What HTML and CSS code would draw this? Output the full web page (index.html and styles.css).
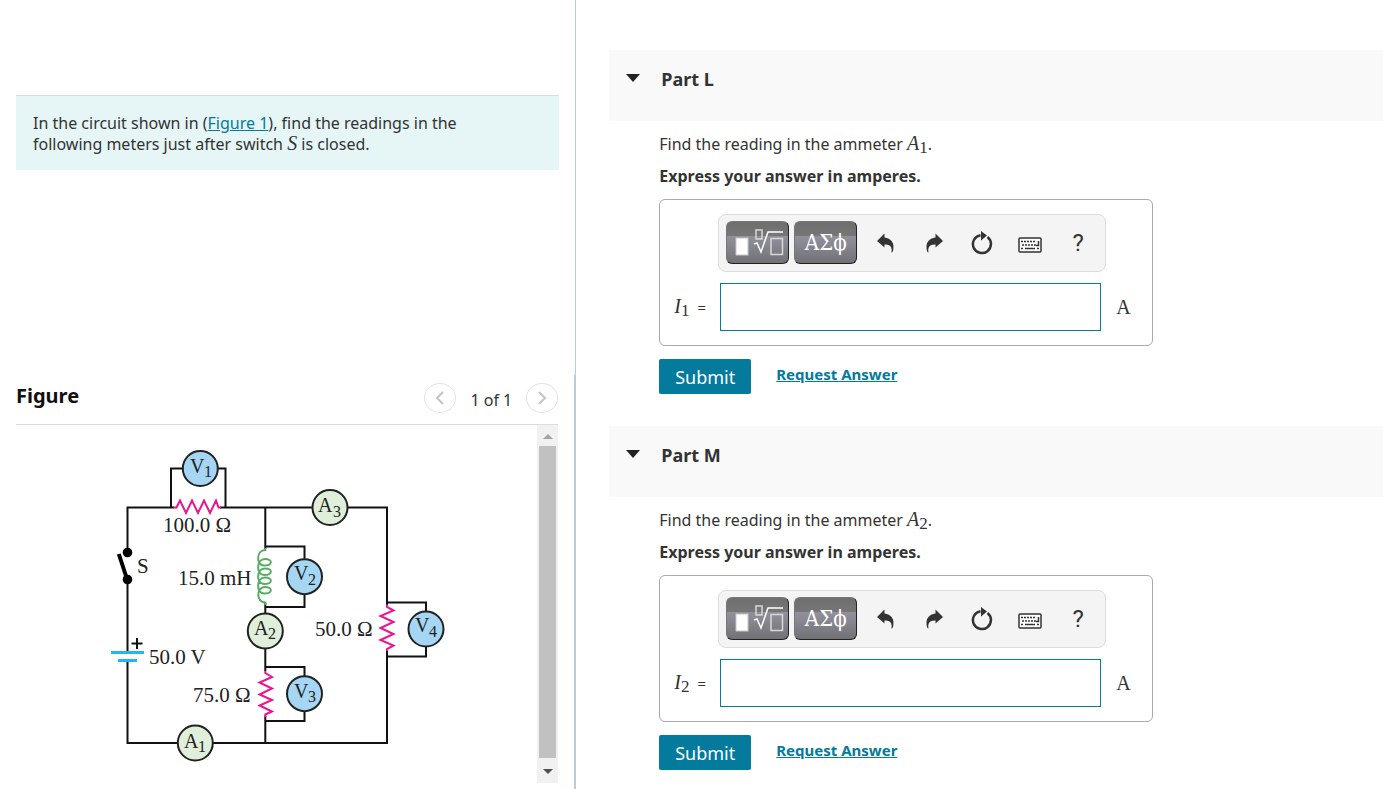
FILE: index.html
```html
<!DOCTYPE html>
<html lang="en">
<head>
  <meta charset="UTF-8">
  <title>Circuit with meters</title>
  <link rel="stylesheet" href="styles.css">
</head>
<body>
<svg class="sprite" aria-hidden="true">
  <symbol id="templates" viewBox="0 0 52 30">
    <rect x="4" y="10" width="12" height="17" fill="#fff" stroke="#c8c8c8"/>
    <rect x="24" y="2" width="6" height="9" fill="none" stroke="#d8d8d8" stroke-width="1.5"/>
    <path d="M22 16l3-1 4 9 7-20h15" fill="none" stroke="#fff" stroke-width="1.5"/>
    <rect x="39" y="10.5" width="11.500" height="16" fill="none" stroke="#d8d8d8" stroke-width="1.5"/>
  </symbol>
  <symbol id="undo" viewBox="0 0 20 20">
    <path d="M1 8L8.500 .500V4.500C15 5 19 10 17 18Q16 20 15.500 19.500C16.500 14 14 11 8.500 11.500V14.500Z"/>
  </symbol>
  <symbol id="redo" viewBox="0 0 20 20">
    <path d="M19 8L11.500 .500V4.500C5 5 1 10 3 18Q4 20 4.500 19.500C3.500 14 6 11 11.500 11.500V14.500Z"/>
  </symbol>
  <symbol id="reset" viewBox="0 0 24 24">
    <path d="M17.500 6A9 9 0 1 1 10.500 4.200" fill="none" stroke="currentColor" stroke-width="2.500"/>
    <path d="M11 0L17 4.500 11 9.500Z"/>
  </symbol>
  <symbol id="keyboard" viewBox="0 0 24 16">
    <rect x="1" y="1" width="22" height="14" rx="1" fill="#fff" stroke="currentColor" stroke-width="1.5"/>
    <path d="M3 4.500h15M4 8h14" fill="none" stroke="currentColor" stroke-width="1.500" stroke-dasharray="2 1"/>
    <path d="M20.500 4v4.500H18M3 11.500h2M7 11.500h10M19 11.500h2" fill="none" stroke="currentColor" stroke-width="1.500"/>
  </symbol>
</svg>

<div class="page">
  <div class="left">
    <div class="problem">
      <p class="intro">In the circuit shown in (<a href="#figure">Figure 1</a>), find the readings in the following meters just after switch <i class="math">S</i> is closed.</p>
    </div>
    <div class="figure" id="figure">
      <div class="figure-head">
        <h2>Figure</h2>
        <div class="pager">
          <button type="button" class="round" aria-label="Previous figure"><svg width="10" height="14" viewBox="0 0 10 14"><path d="M8 1L2 7l6 6"/></svg></button>
          <span>1 of 1</span>
          <button type="button" class="round" aria-label="Next figure"><svg width="10" height="14" viewBox="0 0 10 14"><path d="M2 1l6 6-6 6"/></svg></button>
        </div>
      </div>
      <div class="figure-body">
        <svg class="circuit" width="360" height="330" viewBox="100 440 360 330">
          <!-- wires -->
          <g class="wire">
            <path d="M174 507.500H127.500V552M127.500 580V652M127.500 661V743H387V650M387 606V507.500H220"/>
            <path d="M171 507.500V468.500H225.500V507.500"/>
            <path d="M265.300 507.500V549M265.300 546.500H304.500V607H265.300M265.300 603V671M265.300 667H304.500V721H265.300M265.300 716V743"/>
            <path d="M387 602.500H426V656.500H387"/>
          </g>
          <!-- resistors -->
          <g class="resistor">
            <path d="M173.500 507.500H176.500L180 500.500 186 513 192 500.500 198 513 204 500.500 210 513 216 500.500 218.500 507.500H221"/>
            <path d="M265.300 671V673L272 677 259.500 682.500 272 688.500 259.500 694.500 272 700 259.500 705.500 272 711.500 265.300 714.500V717"/>
            <path d="M387 604.500V607L393.500 610.500 380.500 616 393.500 622 380.500 628 393.500 634 380.500 640 393.500 645.500 387 649V651"/>
          </g>
          <!-- inductor -->
          <path class="coil" d="M265.300 548V550C256 550 256 565.500 264 565.500C273 565.500 273 559 265 559C256 559 256 575 264 575C273 575 273 568.500 265 568.500C256 568.500 256 584 264 584C273 584 273 577.500 265 577.500C256 577.500 256 593.500 264 593.500C273 593.500 273 587 265 587C256 587 256 602.500 265.300 602.500V605"/>
          <!-- switch -->
          <circle cx="127.500" cy="552.500" r="4.800"/>
          <circle cx="127.500" cy="579.500" r="4.800"/>
          <path class="lever" d="M118.800 554L127 579"/>
          <!-- battery -->
          <path class="plate" d="M111 652.500H144M118 660.500H137"/>
          <path class="wire" d="M131.500 643.500H142.500M137 638V649"/>
          <!-- meters -->
          <g class="volt">
            <circle cx="200.300" cy="468.500" r="17.500"/>
            <circle cx="304.500" cy="576.700" r="17.500"/>
            <circle cx="304.500" cy="693.700" r="17.500"/>
            <circle cx="426" cy="629" r="17.500"/>
          </g>
          <g class="amp">
            <circle cx="195.300" cy="743" r="17.500"/>
            <circle cx="265.300" cy="631" r="17.500"/>
            <circle cx="330" cy="507.500" r="17.500"/>
          </g>
          <g class="letter">
            <text x="190" y="473">V</text><text class="sub" x="204" y="477">1</text>
            <text x="294" y="580">V</text><text class="sub" x="308" y="585">2</text>
            <text x="294" y="698">V</text><text class="sub" x="308" y="702">3</text>
            <text x="415" y="632">V</text><text class="sub" x="429" y="637">4</text>
            <text x="184" y="748">A</text><text class="sub" x="198" y="752">1</text>
            <text x="254" y="635">A</text><text class="sub" x="268" y="639">2</text>
            <text x="318" y="512">A</text><text class="sub" x="333" y="517">3</text>
          </g>
          <g class="value">
            <text x="163" y="532">100.0 Ω</text>
            <text x="137" y="573">S</text>
            <text x="178" y="585">15.0 mH</text>
            <text x="315" y="636">50.0 Ω</text>
            <text x="149" y="664">50.0 V</text>
            <text x="193" y="702">75.0 Ω</text>
          </g>
        </svg>
        <div class="scrollbar">
          <span class="arrow up"></span>
          <span class="thumb"></span>
          <span class="arrow down"></span>
        </div>
      </div>
    </div>
  </div>

  <div class="right">
    <section class="part">
      <h2 class="part-head"><span class="caret"></span>Part L</h2>
      <form class="part-body">
        <p>Find the reading in the ammeter <i class="math">A</i><sub>1</sub>.</p>
        <p class="hint">Express your answer in amperes.</p>
        <div class="answer">
          <div class="toolbar">
            <button type="button" class="dark" aria-label="Templates"><svg width="52" height="30"><use href="#templates"/></svg></button>
            <button type="button" class="dark symbols">ΑΣϕ</button>
            <div class="tools">
              <button type="button" aria-label="Undo"><svg width="20" height="20"><use href="#undo"/></svg></button>
              <button type="button" aria-label="Redo"><svg width="20" height="20"><use href="#redo"/></svg></button>
              <button type="button" aria-label="Reset"><svg width="24" height="24"><use href="#reset"/></svg></button>
              <button type="button" class="keys" aria-label="Keyboard shortcuts"><svg width="24" height="16"><use href="#keyboard"/></svg></button>
              <button type="button" class="help">?</button>
            </div>
          </div>
          <label for="i1"><i class="math">I</i><sub>1</sub> <span class="eq">=</span></label>
          <input type="text" id="i1">
          <span class="unit">A</span>
        </div>
        <div class="actions">
          <button type="submit" class="submit">Submit</button>
          <a href="#">Request Answer</a>
        </div>
      </form>
    </section>

    <section class="part">
      <h2 class="part-head"><span class="caret"></span>Part M</h2>
      <form class="part-body">
        <p>Find the reading in the ammeter <i class="math">A</i><sub>2</sub>.</p>
        <p class="hint">Express your answer in amperes.</p>
        <div class="answer">
          <div class="toolbar">
            <button type="button" class="dark" aria-label="Templates"><svg width="52" height="30"><use href="#templates"/></svg></button>
            <button type="button" class="dark symbols">ΑΣϕ</button>
            <div class="tools">
              <button type="button" aria-label="Undo"><svg width="20" height="20"><use href="#undo"/></svg></button>
              <button type="button" aria-label="Redo"><svg width="20" height="20"><use href="#redo"/></svg></button>
              <button type="button" aria-label="Reset"><svg width="24" height="24"><use href="#reset"/></svg></button>
              <button type="button" class="keys" aria-label="Keyboard shortcuts"><svg width="24" height="16"><use href="#keyboard"/></svg></button>
              <button type="button" class="help">?</button>
            </div>
          </div>
          <label for="i2"><i class="math">I</i><sub>2</sub> <span class="eq">=</span></label>
          <input type="text" id="i2">
          <span class="unit">A</span>
        </div>
        <div class="actions">
          <button type="submit" class="submit">Submit</button>
          <a href="#">Request Answer</a>
        </div>
      </form>
    </section>
  </div>
</div>
</body>
</html>
```
FILE: styles.css
```css
* {
  box-sizing: border-box;
}

body, h2, p {
  margin: 0;
}

body {
  font-family: "Noto Sans", "Open Sans", sans-serif;
  font-size: 16px;
  line-height: 21px;
  color: #333;
  background: #fff;
}

button {
  padding: 0;
  border: 0;
  background: none;
  color: #333;
  font-family: inherit;
  cursor: pointer;
}

a {
  color: #047a9c;
}

.sprite {
  display: none;
}

.math, sub, .unit {
  font-family: "Liberation Serif", serif;
}

.math, .unit {
  font-size: 20px;
}

.math, sub {
  line-height: 0;
}

sub {
  font-size: 17px;
  vertical-align: -3px;
}

.page {
  display: grid;
  grid-template-columns: 5fr 7fr;
  min-height: 100vh;
}

/* left side */
.left {
  display: grid;
  grid-template-rows: 375px 1fr;
}

.problem {
  padding: 95px 16px 0;
  border-right: 1px solid #b9cbdc;
}

.intro {
  padding: 17px 64px 15px 17px;
  border-top: 1px solid #dcdcdc;
  background: #e6f6f6;
}

.figure {
  display: flex;
  flex-direction: column;
  padding: 0 16px 6px;
  border-right: 2px solid #b9cbdc;
}

.figure-head {
  display: flex;
  justify-content: space-between;
  height: 50px;
  padding-top: 8px;
  border-bottom: 1px solid #dcdcdc;
}

.figure-head h2 {
  font-size: 20px;
  font-weight: 700;
  line-height: 26px;
  color: #111;
}

.pager {
  display: flex;
  gap: 14px;
}

.pager span {
  padding-top: 7px;
}

.round {
  display: flex;
  align-items: center;
  justify-content: center;
  width: 32px;
  height: 30px;
  border: 1px solid #e3e3e3;
  border-radius: 50%;
}

.round path {
  fill: none;
  stroke: #c4c4c4;
  stroke-width: 2;
}

.figure-body {
  display: flex;
  flex: 1;
  justify-content: space-between;
  padding-left: 84px;
}

.scrollbar {
  display: flex;
  flex-direction: column;
  align-items: center;
  width: 21px;
  background: #f1f1f1;
}

.thumb {
  flex: 1;
  width: 17px;
  background: #c1c1c1;
}

.arrow {
  border: 5px solid transparent;
}

.up {
  margin: 4px 0 7px;
  border-bottom-color: #a3a3a3;
}

.down {
  margin: 11px 0 4px;
  border-top-color: #505050;
}

.circuit {
  margin-top: 15px;
  font-family: "Liberation Serif", serif;
}

.wire {
  fill: none;
  stroke: #111;
  stroke-width: 2;
}

.resistor {
  fill: none;
  stroke: #ec138c;
  stroke-width: 2;
}

.coil {
  fill: none;
  stroke: #55ad62;
  stroke-width: 2;
}

.lever {
  stroke: #000;
  stroke-width: 4;
}

.plate {
  stroke: #20b8ee;
  stroke-width: 3;
}

.volt circle {
  fill: #a5d6f3;
  stroke: #222;
  stroke-width: 2;
}

.amp circle {
  fill: #e0efd9;
  stroke: #222;
  stroke-width: 2;
}

.letter {
  font-size: 20px;
  fill: #222;
}

.letter .sub {
  font-size: 16px;
}

.value {
  font-size: 21px;
  fill: #222;
}

/* right side */
.right {
  padding: 50px 0 0 33px;
}

.part + .part {
  margin-top: 32px;
}

.part-head {
  display: flex;
  gap: 21px;
  height: 71px;
  padding: 17px;
  background: #f9f9f9;
  font-size: 18px;
  font-weight: 700;
  line-height: 24px;
}

.caret {
  margin-top: 7px;
  border: 7px solid transparent;
  border-top: 8px solid #222;
  border-bottom: 0;
  height: 8px;
}

.part-body {
  padding: 13px 50px 0;
}

.part-body p {
  margin-bottom: 11px;
}

.part-body .hint {
  margin-bottom: 12px;
  font-weight: 700;
}

.answer {
  display: grid;
  grid-template-columns: 44px 1fr 32px;
  row-gap: 11px;
  align-items: center;
  max-width: 494px;
  padding: 14px;
  border: 1px solid #a9a9a9;
  border-radius: 6px;
}

.toolbar {
  display: flex;
  grid-column: 2;
  gap: 5px;
  height: 58px;
  padding: 6px 0 7px 7px;
  border: 1px solid #dcdcdc;
  border-radius: 8px;
  background: #f4f4f4;
}

.dark {
  display: flex;
  flex: 0 0 63px;
  align-items: center;
  justify-content: center;
  border: 1px solid #222;
  border-top-color: #777;
  border-left-color: #777;
  border-radius: 6px;
  background: linear-gradient(#6e6e6e, #777 35%, #91919c 35%, #717176);
  color: #fff;
}

.symbols {
  font-family: "DejaVu Serif Condensed", "DejaVu Serif", serif;
  font-size: 22px;
}

.tools {
  display: flex;
  flex: 1;
}

.tools button {
  display: flex;
  flex: 0 0 48px;
  align-items: center;
  justify-content: center;
}

.tools svg {
  fill: currentColor;
}

.tools .keys {
  padding-top: 5px;
}

.tools .help {
  font-family: Roboto, sans-serif;
  font-size: 24px;
}

.answer label {
  grid-column: 1;
  white-space: nowrap;
}

.eq {
  margin-left: 4px;
  font-size: 15px;
}

.answer input {
  min-width: 0;
  height: 48px;
  margin: 0 5px 0 2px;
  padding: 0 10px;
  border: 1px solid #047a9c;
  font-size: 20px;
}

.unit {
  padding-left: 10px;
}

.actions {
  display: flex;
  gap: 25px;
  margin-top: 13px;
}

.submit {
  width: 92px;
  height: 35px;
  border-radius: 2px;
  background: #047a9c;
  color: #fff;
  font-size: 18px;
}

.actions a {
  padding-top: 5px;
  font-size: 15px;
  font-weight: 700;
}
```
